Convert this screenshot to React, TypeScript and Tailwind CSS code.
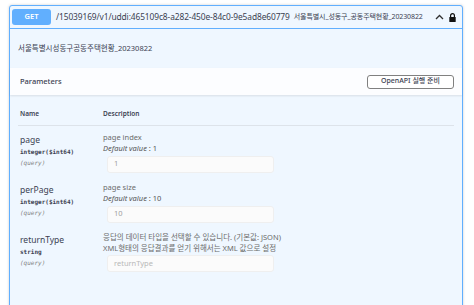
import React from "react";

const sans = "font-['Noto_Sans','Noto_Sans_CJK_KR',sans-serif]";
const mono = "font-['DejaVu_Sans_Mono','Liberation_Mono',monospace]";

type Param = {
  name: string;
  type: string;
  desc: string[];
  def?: string;
  value?: string;
  placeholder?: string;
};

const params: Param[] = [
  { name: "page", type: "integer($int64)", desc: ["page index"], def: "1", value: "1" },
  { name: "perPage", type: "integer($int64)", desc: ["page size"], def: "10", value: "10" },
  {
    name: "returnType",
    type: "string",
    desc: [
      "응답의 데이터 타입을 선택할 수 있습니다. (기본값: JSON)",
      "XML형태의 응답결과를 얻기 위해서는 XML 값으로 설정",
    ],
    placeholder: "returnType",
  },
];

const ParamRow = ({ p }: { p: Param }) => (
  <div className="flex h-[50px]">
    <div className="w-[83px] shrink-0 pt-[2px]">
      <div className="text-[8.5px] leading-[11px] text-[#3b4151]">{p.name}</div>
      <div className={`${mono} mt-[1px] text-[6px] leading-[11px] font-semibold text-[#3b4151]`}>{p.type}</div>
      <div className={`${mono} text-[6px] leading-[12px] italic text-[#808080]`}>(query)</div>
    </div>
    <div className="flex flex-col">
      {p.desc.map((d) => (
        <div key={d} className="text-[7.5px] leading-[10.5px] font-normal text-[#6b6b6b]">{d}</div>
      ))}
      {p.def && (
        <div className="text-[7.5px] leading-[11px] font-normal text-[#555]">
          <span className="italic font-normal">Default value</span> : {p.def}
        </div>
      )}
      <div className="mt-[2px] ml-[4px] flex h-[17px] w-[167px] items-center rounded-[3px] border border-[#efefef] bg-[#fbfbfb] px-[6px] text-[7.5px]">
        {p.value ? (
          <span className="text-[#a0a0a0]">{p.value}</span>
        ) : (
          <span className="text-[#b8b8b8]">{p.placeholder}</span>
        )}
      </div>
    </div>
  </div>
);

export default function App() {
  return (
    <div className={`${sans} h-[305px] w-[474px] overflow-hidden bg-white pl-[9px] pt-[5px]`}>
      <div className="w-[454px] h-[310px] rounded-[3px] border border-[#61affe] bg-[#eff7ff] shadow-[0_0_3px_rgba(0,0,0,0.19)]">
        {/* summary */}
        <div className="flex h-[23px] items-center border-b border-[#61affe] px-[2px]">
          <div className="flex h-[16px] w-[39px] items-center justify-center rounded-[3px] bg-[#61affe] text-[7.5px] font-semibold text-white">
            GET
          </div>
          <div className="ml-[5px] text-[8.4px] tracking-[-0.1px] text-[#3b4151]">
            /15039169/v1/uddi:465109c8-a282-450e-84c0-9e5ad8e60779
          </div>
          <div className="ml-[4px] text-[7px] tracking-[-0.1px] text-[#3b4151]">서울특별시_성동구_공동주택현황_20230822</div>
          <div className="ml-auto mr-[4px] flex items-center gap-[5px]">
            <svg width="9" height="6" viewBox="0 0 9 6">
              <path d="M1 5 L4.5 1.5 L8 5" fill="none" stroke="#303030" strokeWidth="1.3" />
            </svg>
            <svg width="7" height="9" viewBox="0 0 7 9">
              <path d="M1.6 4 V2.6 a1.9 1.9 0 0 1 3.8 0 V4" fill="none" stroke="#111" strokeWidth="1.2" />
              <rect x="0.3" y="4" width="6.4" height="5" rx="0.6" fill="#111" />
            </svg>
          </div>
        </div>
        {/* description */}
        <div className="h-[39px] pl-[8px] pt-[14px] text-[7.5px] leading-[10px] text-[#3b4151]">
          서울특별시성동구공동주택현황_20230822
        </div>
        {/* parameters header */}
        <div className="flex h-[27px] items-center justify-between bg-white/80 pl-[10px] pr-[8px] shadow-[0_1px_2px_rgba(0,0,0,0.1)]">
          <div className="text-[7.5px] font-medium text-[#3b4151]">Parameters</div>
          <button className="h-[14px] w-[87px] rounded-[3px] border border-[#808080] bg-white text-[7px] font-medium text-[#3b4151]">
            OpenAPI 실행 준비
          </button>
        </div>
        {/* table */}
        <div className="px-[8px] pt-[14px]">
          <div className="flex h-[17px] items-start border-b border-[#dde3ea] pl-[2px] text-[6.5px] font-semibold text-[#3b4151]">
            <div className="w-[83px]">Name</div>
            <div>Description</div>
          </div>
          <div className="pl-[2px] pt-[6px]">
            {params.map((p) => (
              <ParamRow key={p.name} p={p} />
            ))}
          </div>
        </div>
      </div>
    </div>
  );
}
